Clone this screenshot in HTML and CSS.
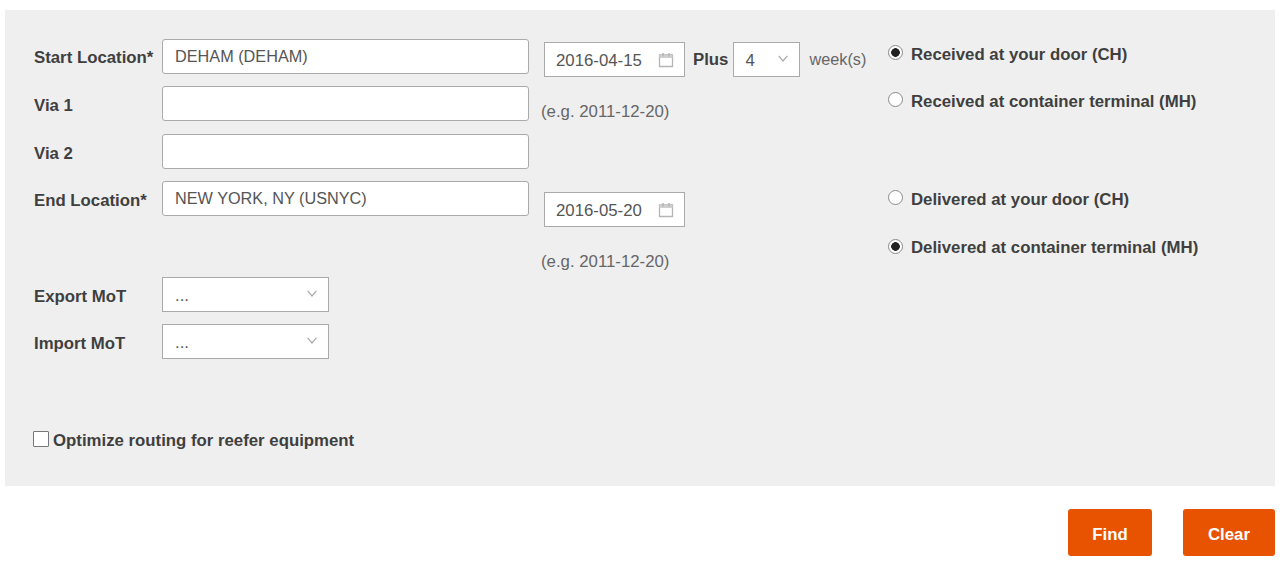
FILE: index.html
```html
<!DOCTYPE html>
<html lang="en">
<head>
<meta charset="utf-8">
<title>Routing search</title>
<link rel="stylesheet" href="styles.css">
</head>
<body>
<form class="page">
  <section class="panel">
    <div class="grid">
      <label class="label">Start Location*</label>
      <input class="text-input" type="text" value="DEHAM (DEHAM)">
      <div class="mid mid-first">
        <div class="field date">
          <span class="field-value">2016-04-15</span>
          <svg class="cal" viewBox="0 0 16 16" width="16" height="16"><path d="M1.5 3h13v11.5h-13z" fill="none" stroke="#b5b5b5" stroke-width="1.3"/><path d="M1.5 3h13v3h-13z" fill="#cfcfcf"/><path d="M5 1v3.5M11 1v3.5" fill="none" stroke="#b5b5b5" stroke-width="1.5"/></svg>
        </div>
        <span class="plus">Plus</span>
        <div class="field weeks">
          <span class="field-value">4</span>
          <svg class="chev" viewBox="0 0 10 7" width="10" height="7"><path d="M.7.8 5 6 9.3.8" fill="none" stroke="#aaa" stroke-width="1.2"/></svg>
        </div>
        <span class="week-text">week(s)</span>
      </div>
      <label class="radio-row"><input class="radio" type="radio" name="origin" checked>Received at your door (CH)</label>

      <label class="label label-next">Via 1</label>
      <input class="text-input" type="text">
      <div class="mid hint hint-first">(e.g. 2011-12-20)</div>
      <label class="radio-row"><input class="radio" type="radio" name="origin">Received at container terminal (MH)</label>

      <label class="label label-next">Via 2</label>
      <input class="text-input" type="text">
      <div class="mid"></div>
      <div></div>

      <label class="label label-next">End Location*</label>
      <input class="text-input input-end" type="text" value="NEW YORK, NY (USNYC)">
      <div class="mid mid-end">
        <div class="field date">
          <span class="field-value">2016-05-20</span>
          <svg class="cal" viewBox="0 0 16 16" width="16" height="16"><path d="M1.5 3h13v11.5h-13z" fill="none" stroke="#b5b5b5" stroke-width="1.3"/><path d="M1.5 3h13v3h-13z" fill="#cfcfcf"/><path d="M5 1v3.5M11 1v3.5" fill="none" stroke="#b5b5b5" stroke-width="1.5"/></svg>
        </div>
      </div>
      <label class="radio-row radio-row-end"><input class="radio" type="radio" name="dest">Delivered at your door (CH)</label>

      <div></div>
      <div></div>
      <div class="mid hint hint-end">(e.g. 2011-12-20)</div>
      <label class="radio-row radio-row-last"><input class="radio" type="radio" name="dest" checked>Delivered at container terminal (MH)</label>

      <label class="label label-mot">Export MoT</label>
      <div class="field mot">
        <span class="field-value dots">...</span>
        <svg class="chev" viewBox="0 0 10 7" width="10" height="7"><path d="M.7.8 5 6 9.3.8" fill="none" stroke="#aaa" stroke-width="1.2"/></svg>
      </div>
      <div></div>
      <div></div>

      <label class="label label-mot">Import MoT</label>
      <div class="field mot">
        <span class="field-value dots">...</span>
        <svg class="chev" viewBox="0 0 10 7" width="10" height="7"><path d="M.7.8 5 6 9.3.8" fill="none" stroke="#aaa" stroke-width="1.2"/></svg>
      </div>
      <div></div>
      <div></div>
    </div>
    <label class="check-row"><input class="check" type="checkbox">Optimize routing for reefer equipment</label>
  </section>
  <div class="actions">
    <button class="btn btn-find" type="button">Find</button>
    <button class="btn btn-clear" type="button">Clear</button>
  </div>
</form>
</body>
</html>
```
FILE: styles.css
```css
* { box-sizing: border-box; }
html, body { margin: 0; padding: 0; background: #fff; }
body {
  font-family: "Liberation Sans", Arial, sans-serif;
  font-size: 16.8px;
  color: #444;
  overflow: hidden;
}
.page { padding: 10px 5px 0 5px; }
.panel {
  background: #efefef;
  height: 476px;
  padding: 29px 0 0 29px;
}
.grid {
  display: grid;
  grid-template-columns: 128px 367px 359px 1fr;
  grid-auto-rows: 47.4px;
}
.label {
  font-weight: 700;
  line-height: 35px;
  height: 35px;
  padding-top: 1px;
  color: #3f3f3f;
}
.label-next { padding-top: 2px; }
.label-mot { padding-top: 3px; }
.text-input {
  width: 367px;
  height: 35px;
  border: 1px solid #aaa;
  border-radius: 3px;
  background: #fff;
  padding: 0 12px 1px;
  font: 16.25px "Liberation Sans", Arial, sans-serif;
  color: #555;
  outline: none;
}
.input-end { padding-bottom: 0; }
.mid { padding-left: 12px; }
.mid-first { display: flex; align-items: flex-start; padding: 3px 0 0 15px; }
.mid-end { padding: 11px 0 0 15px; }
.field {
  position: relative;
  display: flex;
  align-items: center;
  height: 35px;
  background: #fff;
  border: 1px solid #aaa;
  color: #555;
}
.field-value { padding: 2px 0 0 11px; }
.date { width: 141px; }
.weeks { width: 67px; }
.mot { width: 167px; margin-top: 1px; }
.dots { line-height: 1; padding: 4px 0 0 12px; }
.cal { position: absolute; right: 10px; top: 9px; }
.chev { position: absolute; right: 11px; top: 12px; }
.plus { font-weight: 700; line-height: 35px; margin: 0 5px 0 8px; color: #3f3f3f; }
.week-text { font-size: 16.25px; line-height: 35px; margin-left: 9px; color: #666; }
.hint { color: #666; }
.hint-first { line-height: 20px; padding-top: 16px; }
.hint-end { line-height: 20px; padding-top: 23px; }
.radio-row {
  display: flex;
  align-items: center;
  gap: 8.5px;
  height: 30px;
  font-weight: 700;
  margin-left: -0.5px;
  padding-top: 1px;
  color: #3f3f3f;
}
.radio-row-end { margin-top: 3px; }
.radio-row-last { margin-top: 4px; }
.radio {
  appearance: none;
  width: 15px;
  height: 15px;
  margin: -4px 0 0 0;
  border: 1px solid #8a8a8a;
  border-radius: 50%;
  background: #fff;
  flex: none;
}
.radio:checked { background: radial-gradient(circle, #222 0 4px, #fff 4.6px); }
.check-row {
  display: flex;
  align-items: center;
  gap: 4px;
  margin: 59px 0 0 -1px;
  height: 22px;
  font-weight: 700;
  color: #3f3f3f;
}
.check {
  appearance: none;
  width: 16px;
  height: 16px;
  margin: -3px 0 0 0;
  border: 1px solid #777;
  border-radius: 1px;
  background: #fff;
  flex: none;
}
.actions {
  display: flex;
  justify-content: flex-end;
  gap: 31px;
  padding: 23px 0 0 0;
}
.btn {
  height: 47px;
  border: 0;
  border-radius: 3px;
  background: #e75300;
  color: #fff;
  font: 700 16.8px "Liberation Sans", Arial, sans-serif;
  padding: 5px 0 0;
}
.btn-find { width: 84px; }
.btn-clear { width: 92px; }
```
